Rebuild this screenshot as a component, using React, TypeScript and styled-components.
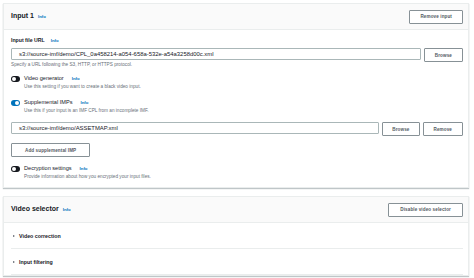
import { FC } from 'react';
import styled, { createGlobalStyle } from 'styled-components';

const Global = createGlobalStyle`
  body {
    margin: 0;
    background: #ffffff;
    font-family: 'Liberation Sans', Arial, sans-serif;
    color: #16191f;
  }
`;

const Page = styled.div`
  display: flex;
  flex-direction: column;
  gap: 8px;
  padding: 3px 5px 0 3px;
  height: 278px;
  overflow: hidden;
  box-sizing: border-box;
`;

const Card = styled.section`
  background: #fff;
  border: 1px solid #eaeded;
  box-shadow: 0 1px 1px 0 rgba(0, 28, 36, 0.25);
  flex-shrink: 0;
`;

const Header = styled.div`
  height: 25px;
  background: #fafafa;
  border-bottom: 1px solid #eaeded;
  display: flex;
  align-items: center;
  justify-content: space-between;
  padding: 0 5px 0 7px;
`;

const Title = styled.h2`
  margin: 0;
  font-size: 7px;
  font-weight: 700;
  line-height: 8px;
  display: flex;
  align-items: baseline;
  gap: 4px;
`;

const Info = styled.span`
  font-size: 4.3px;
  font-weight: 700;
  color: #0073bb;
`;

const Button = styled.button<{ $pad?: number }>`
  height: 14px;
  padding: 0 ${(p) => p.$pad ?? 8}px;
  border: 1px solid #879196;
  border-radius: 1px;
  background: #fff;
  color: #545b64;
  font-family: inherit;
  font-size: 4.6px;
  font-weight: 700;
  letter-spacing: 0.1px;
  flex-shrink: 0;
`;

const Body = styled.div`
  display: flex;
  flex-direction: column;
  padding: 6px 5px 7px 7px;
`;

const Label = styled.div`
  font-size: 5.2px;
  font-weight: 700;
  line-height: 8px;
  display: flex;
  align-items: baseline;
  gap: 6px;
`;

const Row = styled.div<{ $mt?: number }>`
  display: flex;
  gap: 3px;
  margin-top: ${(p) => p.$mt ?? 0}px;
`;

const Input = styled.div`
  flex: 1;
  height: 12px;
  box-sizing: border-box;
  border: 1px solid #aab7b8;
  border-radius: 1px;
  display: flex;
  align-items: center;
  padding-left: 7px;
  font-size: 5.9px;
  color: #16191f;
  white-space: nowrap;
`;

const Hint = styled.div<{ $indent?: boolean; $mt?: number }>`
  font-size: 4.7px;
  line-height: 7px;
  color: #687078;
  margin-top: ${(p) => p.$mt ?? 0}px;
  padding-left: ${(p) => (p.$indent ? 13 : 0)}px;
`;

const ToggleRow = styled.div<{ $mt: number }>`
  display: flex;
  align-items: center;
  gap: 4px;
  margin-top: ${(p) => p.$mt}px;
  font-size: 5.6px;
  line-height: 8px;
`;

const Track = styled.span<{ $on?: boolean }>`
  position: relative;
  width: 9px;
  height: 6px;
  border-radius: 3px;
  background: ${(p) => (p.$on ? '#0073bb' : '#16191f')};
  flex-shrink: 0;
  &::after {
    content: '';
    position: absolute;
    top: 1px;
    left: ${(p) => (p.$on ? 4 : 1)}px;
    width: 4px;
    height: 4px;
    border-radius: 50%;
    background: #fff;
  }
`;

const ToggleText = styled.span`
  display: flex;
  align-items: baseline;
  gap: 8px;
`;

const AddRow = styled.div`
  margin-top: 7px;
  display: flex;
`;

const Expand = styled.div`
  height: 25px;
  border-bottom: 1px solid #eaeded;
  display: flex;
  align-items: center;
  gap: 4px;
  padding-left: 2px;
  font-size: 5.3px;
  font-weight: 700;
  color: #16191f;
`;

const Caret = styled.span`
  width: 0;
  height: 0;
  border-top: 1.6px solid transparent;
  border-bottom: 1.6px solid transparent;
  border-left: 2.6px solid #545b64;
`;

const ExpandBody = styled.div`
  padding: 0 5px 0 7px;
`;

const Toggle: FC<{ on?: boolean; label: string; mt: number }> = ({ on, label, mt }) => (
  <ToggleRow $mt={mt}>
    <Track $on={on} />
    <ToggleText>
      {label}
      <Info>Info</Info>
    </ToggleText>
  </ToggleRow>
);

export default function App() {
  return (
    <>
      <Global />
      <Page>
        <Card>
          <Header>
            <Title>
              Input 1 <Info>Info</Info>
            </Title>
            <Button $pad={10}>Remove input</Button>
          </Header>
          <Body>
            <Label>
              Input file URL <Info>Info</Info>
            </Label>
            <Row $mt={3}>
              <Input>s3://source-imf/demo/CPL_0a458214-a054-658a-532e-a54a3258d00c.xml</Input>
              <Button $pad={10}>Browse</Button>
            </Row>
            <Hint $mt={-1}>Specify a URL following the S3, HTTP, or HTTPS protocol.</Hint>
            <Toggle label="Video generator" mt={6} />
            <Hint $indent>Use this setting if you want to create a black video input.</Hint>
            <Toggle on label="Supplemental IMPs" mt={8} />
            <Hint $indent>Use this if your input is an IMF CPL from an incomplete IMF.</Hint>
            <Row $mt={8}>
              <Input>s3://source-imf/demo/ASSETMAP.xml</Input>
              <Button $pad={9}>Browse</Button>
              <Button $pad={10}>Remove</Button>
            </Row>
            <AddRow>
              <Button $pad={13}>Add supplemental IMP</Button>
            </AddRow>
            <Toggle label="Decryption settings" mt={7} />
            <Hint $indent>Provide information about how you encrypted your input files.</Hint>
          </Body>
        </Card>
        <Card>
          <Header>
            <Title>
              Video selector <Info>Info</Info>
            </Title>
            <Button $pad={11}>Disable video selector</Button>
          </Header>
          <ExpandBody>
            <Expand>
              <Caret />
              Video correction
            </Expand>
            <Expand>
              <Caret />
              Input filtering
            </Expand>
          </ExpandBody>
        </Card>
      </Page>
    </>
  );
}
